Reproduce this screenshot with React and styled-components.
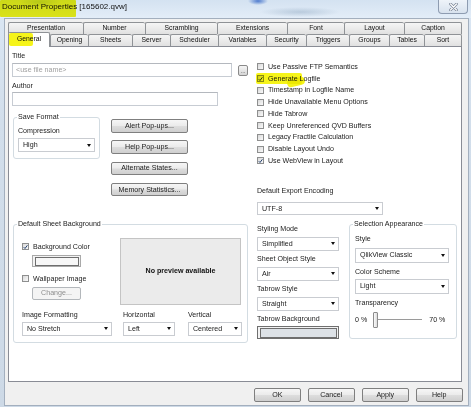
import React from 'react';
import styled, { createGlobalStyle } from 'styled-components';

const GlobalStyle = createGlobalStyle`
  * { box-sizing: border-box; }
  html, body { margin: 0; padding: 0; background: #fff; }
  body {
    font-family: "Liberation Sans", Arial, sans-serif;
    font-size: 7.1px;
    color: #1b1b1b;
  }
`;

const Window = styled.div`
  width: 471px;
  height: 407px;
  display: flex;
  flex-direction: column;
  background: linear-gradient(180deg, #dbe7f4 0%, #d2deeb 30%, #cdd9e6 100%);
`;

const TitleBar = styled.div`
  position: relative;
  height: 18px;
  flex: none;
  display: flex;
  align-items: flex-start;
  padding-left: 2px;
  background:
    radial-gradient(10px 4px at 258px 1px, rgba(55, 105, 200, 0.85), transparent),
    radial-gradient(40px 5px at 300px 12px, rgba(140, 165, 190, 0.45), transparent),
    radial-gradient(20px 5px at 40px 2px, rgba(170, 195, 225, 0.6), transparent),
    linear-gradient(180deg, #d4e2f1, #e3edf8);
`;

const TitleText = styled.div`
  padding-top: 2px;
  font-size: 8px;
  line-height: 10px;
  color: #111;
  white-space: nowrap;
`;

const CloseButton = styled.div`
  margin-left: auto;
  margin-right: 3px;
  width: 30px;
  height: 14px;
  border: 1px solid #8e9cb1;
  border-top: none;
  border-radius: 0 0 4px 4px;
  background: linear-gradient(180deg, #eef3f9, #d8e2ee);
  display: flex;
  align-items: center;
  justify-content: center;
`;

const Highlight = styled.span`
  position: absolute;
  left: ${p => p.$l}px;
  top: ${p => p.$t}px;
  width: ${p => p.$w}px;
  height: ${p => p.$h}px;
  background: #f6f41a;
  mix-blend-mode: multiply;
  border-radius: ${p => p.$r || 2}px;
  transform: ${p => (p.$rot ? `rotate(${p.$rot}deg)` : 'none')};
  pointer-events: none;
`;

const Client = styled.div`
  margin: 0 2px 0 4px;
  height: 388px;
  flex: none;
  border: 1px solid #a3afbe;
  background: #f0f0f0;
  padding: 3px 6px 3px 3px;
  display: flex;
  flex-direction: column;
`;

const TabStrip = styled.div`
  height: 24px;
  flex: none;
  display: flex;
  flex-direction: column;
`;

const TabRow = styled.div`
  display: flex;
  height: 12px;
  align-items: flex-start;
`;

const Tab = styled.div`
  position: relative;
  width: ${p => p.$w}px;
  height: ${p => (p.$active ? 15 : 12)}px;
  margin-top: ${p => (p.$active ? -2 : 0)}px;
  border: 1px solid #8f9296;
  border-right: ${p => (p.$last || p.$active ? '1px solid #8f9296' : 'none')};
  border-bottom: none;
  border-radius: 2px 2px 0 0;
  background: ${p => (p.$active ? '#fff' : 'linear-gradient(180deg, #f5f5f5, #e1e1e1)')};
  z-index: ${p => (p.$active ? 2 : 'auto')};
  font-size: 6.8px;
  line-height: ${p => (p.$active ? 12 : 10.5)}px;
  text-align: center;
  white-space: nowrap;
  color: #111;
`;

const Panel = styled.div`
  width: 454px;
  height: 336px;
  flex: none;
  border: 1px solid #898c95;
  background: #fff;
  padding: 5px 0 0 3px;
`;

const TopSection = styled.div`
  display: flex;
  align-items: flex-start;
`;

const LeftCol = styled.div`
  width: 236px;
  display: flex;
  flex-direction: column;
`;

const RightCol = styled.div`
  margin-left: 9px;
  display: flex;
  flex-direction: column;
`;

const Label = styled.div`
  height: 9px;
  line-height: 9px;
  margin-top: ${p => p.$mt || 0}px;
  white-space: nowrap;
`;

const TitleRow = styled.div`
  display: flex;
  align-items: center;
  height: 14px;
  margin-top: 2px;
`;

const TextInput = styled.div`
  width: ${p => p.$w}px;
  height: 14px;
  margin-top: ${p => p.$mt || 0}px;
  border: 1px solid #c7ccd3;
  border-top-color: #b4b8be;
  background: #fff;
  padding-left: 3px;
  line-height: 12px;
  color: #a0a0a0;
`;

const DotsButton = styled.div`
  width: 10px;
  height: 11px;
  margin-left: 6px;
  border: 1px solid #8a8a8a;
  border-radius: 2px;
  background: linear-gradient(180deg, #f5f5f5, #d6d6d6);
  font-size: 6px;
  line-height: 10px;
  text-align: center;
  color: #333;
`;

const SaveRow = styled.div`
  display: flex;
  align-items: flex-start;
  margin-top: 6.5px;
`;

const Group = styled.fieldset`
  margin: 0 0 0 ${p => p.$ml || 0}px;
  width: ${p => p.$w}px;
  min-width: 0;
  padding: 0 ${p => p.$pr || 4}px ${p => p.$pb || 6}px 4px;
  border: 1px solid #d3dce2;
  border-radius: 3px;
`;

const Legend = styled.legend`
  padding: 0 1px;
  margin-left: -1px;
  height: 9px;
  line-height: 9px;
  white-space: nowrap;
`;

const GroupBody = styled.div`
  display: flex;
  flex-direction: column;
  padding-top: ${p => p.$pt || 0}px;
  padding-left: ${p => p.$pl || 0}px;
`;

const Combo = styled.div`
  width: ${p => (p.$w ? `${p.$w}px` : '100%')};
  height: ${p => p.$h || 14}px;
  margin-top: ${p => p.$mt || 0}px;
  border: 1px solid #c9ccd1;
  background: #fff;
  display: flex;
  align-items: center;
  justify-content: space-between;
  padding: 0 3px 0 4px;
  white-space: nowrap;

  &::after {
    content: '';
    border-left: 2.5px solid transparent;
    border-right: 2.5px solid transparent;
    border-top: 3px solid #111;
  }
`;

const ButtonCol = styled.div`
  display: flex;
  flex-direction: column;
  gap: 7.8px;
  margin: 6.5px 0 0 11px;
`;

const PushButton = styled.div`
  width: ${p => p.$w}px;
  height: ${p => p.$h || 13.5}px;
  flex: none;
  margin-left: ${p => p.$ml || 0}px;
  margin-top: ${p => p.$mt || 0}px;
  border: 1px solid ${p => (p.$disabled ? '#b3b7bb' : '#7f7f7f')};
  border-radius: 2px;
  background: ${p =>
    p.$disabled
      ? '#f4f4f4'
      : 'linear-gradient(180deg, #f6f6f6 0%, #ebebeb 48%, #dddddd 52%, #cfcfcf 100%)'};
  color: ${p => (p.$disabled ? '#8d8d8d' : '#1b1b1b')};
  display: flex;
  align-items: center;
  justify-content: center;
  white-space: nowrap;
`;

const CheckList = styled.div`
  margin-top: 9.1px;
  display: flex;
  flex-direction: column;
`;

const CheckRow = styled.div`
  position: relative;
  display: flex;
  align-items: center;
  gap: 4px;
  height: ${p => p.$h || 11.75}px;
  margin-top: ${p => p.$mt || 0}px;
  white-space: nowrap;
`;

const Box = styled.span`
  width: 7px;
  height: 7px;
  flex: none;
  border: 1px solid #8e8f8f;
  background: linear-gradient(135deg, #d9d9d9, #fafafa);
  display: flex;
  align-items: center;
  justify-content: center;
`;

const BottomSection = styled.div`
  display: flex;
  align-items: flex-start;
  margin-top: 5px;
`;

const UpperRow = styled.div`
  display: flex;
  align-items: flex-start;
  margin-top: 8.5px;
`;

const SubCol = styled.div`
  width: 98px;
  display: flex;
  flex-direction: column;
`;

const Swatch = styled.div`
  width: ${p => (p.$w ? `${p.$w}px` : '100%')};
  height: ${p => p.$h}px;
  margin-left: ${p => p.$ml || 0}px;
  margin-top: ${p => p.$mt || 0}px;
  border: 1px solid ${p => p.$edge};
  padding: 1.5px;
  background: #f3f3f3;

  &::after {
    content: '';
    display: block;
    height: 100%;
    border: 1px solid #6e6e6e;
    background: ${p => p.$fill};
  }
`;

const Preview = styled.div`
  width: 121px;
  height: 67px;
  border: 1px solid #c4c4c4;
  background: #ebebeb;
  display: flex;
  align-items: center;
  justify-content: center;
  font-weight: bold;
  color: #111;
`;

const FieldRow = styled.div`
  display: flex;
  align-items: flex-start;
  margin-top: 6.5px;
`;

const Field = styled.div`
  width: ${p => p.$w}px;
  margin-left: ${p => p.$ml || 0}px;
  display: flex;
  flex-direction: column;
`;

const MiddleCol = styled.div`
  width: 82px;
  margin-left: 9px;
  display: flex;
  flex-direction: column;
`;

const SliderRow = styled.div`
  display: flex;
  align-items: center;
  height: 16px;
  margin-top: 3.5px;
  white-space: nowrap;
`;

const SliderEnd = styled.span`
  width: ${p => p.$w}px;
  margin-left: ${p => p.$ml || 0}px;
`;

const Thumb = styled.span`
  width: 5px;
  height: 16px;
  border: 1px solid #8c8c8c;
  border-radius: 1px;
  background: linear-gradient(90deg, #fafafa, #dcdcdc);
`;

const Track = styled.span`
  width: 45px;
  height: 1px;
  background: #9a9a9a;
`;

const ButtonBar = styled.div`
  display: flex;
  justify-content: flex-end;
  gap: 6.5px;
  margin: 6px -1px 0 0;
`;

const Check = () => (
  <svg width="6" height="6" viewBox="0 0 10 10">
    <path d="M1.5 5.4 L4 8 L8.8 1.6" stroke="#24406f" strokeWidth="2" fill="none" />
  </svg>
);

const CloseGlyph = () => (
  <svg width="9" height="8" viewBox="0 0 9 8">
    <path d="M1.5 1 L7.5 7 M7.5 1 L1.5 7" stroke="#7a8596" strokeWidth="2.6" strokeLinecap="round" />
    <path d="M1.5 1 L7.5 7 M7.5 1 L1.5 7" stroke="#fff" strokeWidth="1.2" strokeLinecap="round" />
  </svg>
);

const topTabs = [
  ['Presentation', 75],
  ['Number', 62],
  ['Scrambling', 72],
  ['Extensions', 70],
  ['Font', 57],
  ['Layout', 60],
  ['Caption', 58],
];

const bottomTabs = [
  ['General', 42],
  ['Opening', 38],
  ['Sheets', 44],
  ['Server', 38],
  ['Scheduler', 48],
  ['Variables', 48],
  ['Security', 40],
  ['Triggers', 43],
  ['Groups', 40],
  ['Tables', 35],
  ['Sort', 38],
];

const options = [
  ['Use Passive FTP Semantics', false],
  ['Generate Logfile', true],
  ['Timestamp in Logfile Name', false],
  ['Hide Unavailable Menu Options', false],
  ['Hide Tabrow', false],
  ['Keep Unreferenced QVD Buffers', false],
  ['Legacy Fractile Calculation', false],
  ['Disable Layout Undo', false],
  ['Use WebView in Layout', true],
];

export default function App() {
  return (
    <>
      <GlobalStyle />
      <Window>
        <TitleBar>
          <TitleText>Document Properties [165602.qvw]</TitleText>
          <Highlight $l={0} $t={0} $w={76} $h={17} $r={1} />
          <CloseButton>
            <CloseGlyph />
          </CloseButton>
        </TitleBar>

        <Client>
          <TabStrip>
            <TabRow>
              {topTabs.map(([name, w], i) => (
                <Tab key={name} $w={w} $last={i === topTabs.length - 1}>
                  {name}
                </Tab>
              ))}
            </TabRow>
            <TabRow>
              {bottomTabs.map(([name, w], i) => (
                <Tab key={name} $w={w} $active={i === 0} $last={i === bottomTabs.length - 1}>
                  {name}
                  {i === 0 && <Highlight $l={0} $t={0} $w={24} $h={13} />}
                </Tab>
              ))}
            </TabRow>
          </TabStrip>

          <Panel>
            <TopSection>
              <LeftCol>
                <Label>Title</Label>
                <TitleRow>
                  <TextInput $w={220}>&lt;use file name&gt;</TextInput>
                  <DotsButton>...</DotsButton>
                </TitleRow>
                <Label $mt={5}>Author</Label>
                <TextInput $w={206} $mt={1} />
                <SaveRow>
                  <Group $w={87} $ml={1}>
                    <Legend>Save Format</Legend>
                    <GroupBody $pt={5}>
                      <Label>Compression</Label>
                      <Combo $w={77} $mt={2.5}>High</Combo>
                    </GroupBody>
                  </Group>
                  <ButtonCol>
                    <PushButton $w={77}>Alert Pop-ups...</PushButton>
                    <PushButton $w={77}>Help Pop-ups...</PushButton>
                    <PushButton $w={77}>Alternate States...</PushButton>
                    <PushButton $w={77}>Memory Statistics...</PushButton>
                  </ButtonCol>
                </SaveRow>
              </LeftCol>

              <RightCol>
                <CheckList>
                  {options.map(([text, on]) => (
                    <CheckRow key={text}>
                      <Box>{on && <Check />}</Box>
                      {text}
                      {text === 'Generate Logfile' && (
                        <>
                          <Highlight $l={-1} $t={0.5} $w={46} $h={11} />
                          <Highlight $l={30} $t={5} $w={18} $h={8} $rot={-14} $r={4} />
                        </>
                      )}
                    </CheckRow>
                  ))}
                </CheckList>
                <Label $mt={20.6}>Default Export Encoding</Label>
                <Combo $w={126} $h={13.5} $mt={5.5}>UTF-8</Combo>
              </RightCol>
            </TopSection>

            <BottomSection>
              <Group $w={235} $ml={1} $pr={5}>
                <Legend>Default Sheet Background</Legend>
                <GroupBody $pl={4}>
                  <UpperRow>
                    <SubCol>
                      <CheckRow $h={11} $mt={3.5}>
                        <Box>
                          <Check />
                        </Box>
                        Background Color
                      </CheckRow>
                      <Swatch $w={49} $h={12} $ml={10} $mt={2.5} $edge="#a9a9a9" $fill="#f7f7f7" />
                      <CheckRow $h={11} $mt={6.5}>
                        <Box />
                        Wallpaper Image
                      </CheckRow>
                      <PushButton $w={49} $h={13} $ml={10} $mt={2.5} $disabled>
                        Change...
                      </PushButton>
                    </SubCol>
                    <Preview>No preview available</Preview>
                  </UpperRow>
                  <FieldRow>
                    <Field $w={90}>
                      <Label>Image Formatting</Label>
                      <Combo $mt={1.5}>No Stretch</Combo>
                    </Field>
                    <Field $w={52} $ml={11}>
                      <Label>Horizontal</Label>
                      <Combo $mt={1.5}>Left</Combo>
                    </Field>
                    <Field $w={54} $ml={13}>
                      <Label>Vertical</Label>
                      <Combo $mt={1.5}>Centered</Combo>
                    </Field>
                  </FieldRow>
                </GroupBody>
              </Group>

              <MiddleCol>
                <Label $mt={5}>Styling Mode</Label>
                <Combo $mt={2.5}>Simplified</Combo>
                <Label $mt={4.5}>Sheet Object Style</Label>
                <Combo $mt={2.5}>Air</Combo>
                <Label $mt={4.5}>Tabrow Style</Label>
                <Combo $mt={2.5}>Straight</Combo>
                <Label $mt={4.5}>Tabrow Background</Label>
                <Swatch $h={13} $mt={1.5} $edge="#6f6f6f" $fill="#dde2e7" />
              </MiddleCol>

              <Group $w={108} $ml={10} $pr={7} $pb={10}>
                <Legend>Selection Appearance</Legend>
                <GroupBody $pl={1}>
                  <Label $mt={6}>Style</Label>
                  <Combo $w={94} $h={15} $mt={3.5}>QlikView Classic</Combo>
                  <Label $mt={5.5}>Color Scheme</Label>
                  <Combo $w={94} $h={15} $mt={1.5}>Light</Combo>
                  <Label $mt={5.5}>Transparency</Label>
                  <SliderRow>
                    <SliderEnd $w={18}>0 %</SliderEnd>
                    <Thumb />
                    <Track />
                    <SliderEnd $w={20} $ml={7}>70 %</SliderEnd>
                  </SliderRow>
                </GroupBody>
              </Group>
            </BottomSection>
          </Panel>

          <ButtonBar>
            <PushButton $w={47.5} $h={14}>OK</PushButton>
            <PushButton $w={47.5} $h={14}>Cancel</PushButton>
            <PushButton $w={47.5} $h={14}>Apply</PushButton>
            <PushButton $w={47.5} $h={14}>Help</PushButton>
          </ButtonBar>
        </Client>
      </Window>
    </>
  );
}
